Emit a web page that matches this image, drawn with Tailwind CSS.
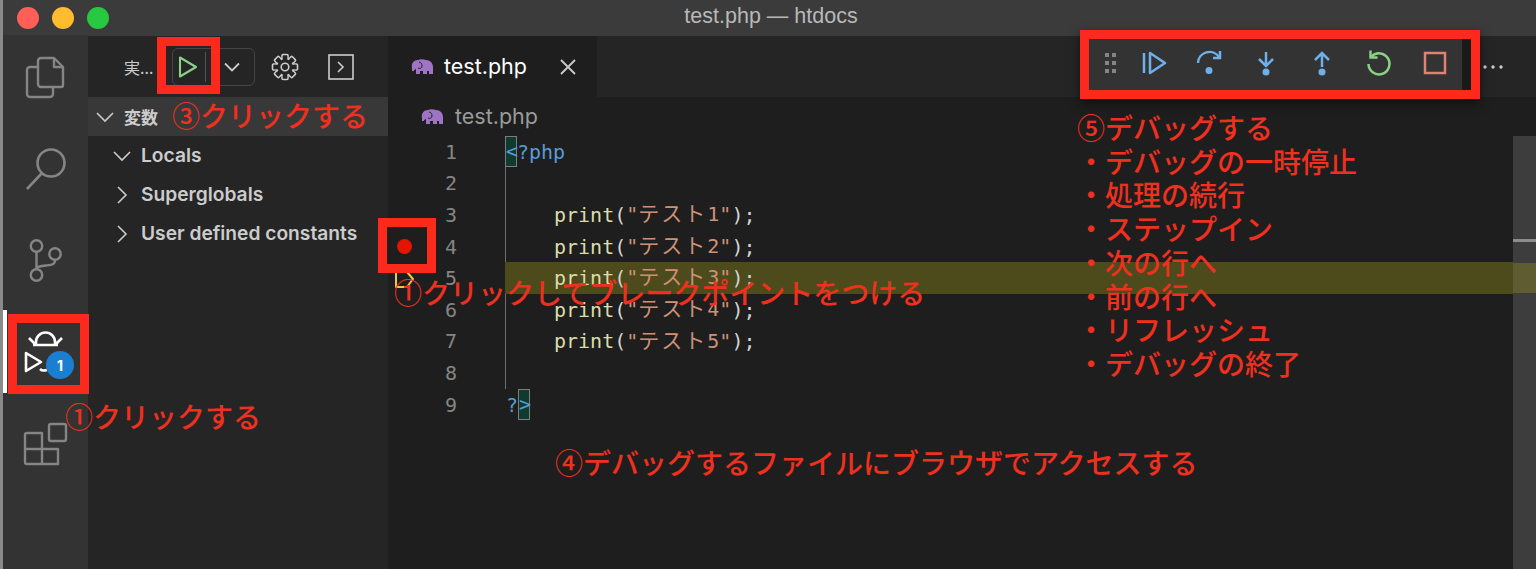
<!DOCTYPE html>
<html lang="ja">
<head>
    <meta charset="UTF-8">
    <script src="https://cdn.jsdelivr.net/npm/@tailwindcss/browser@4"></script>
    <title>test.php — htdocs</title>
</head>
<body class="bg-[#1e1e1e]">
<div class="relative w-[1536px] h-[569px] overflow-hidden flex flex-col [font-family:Inter,'Noto_Sans_CJK_JP',sans-serif]">

  <!-- title bar -->
  <div class="h-9 shrink-0 bg-[#3b3b3b] flex items-center relative border-l-[3px] border-[#8a8a8a]">
    <div class="flex gap-[13px] ml-[14px]">
      <span class="w-[22px] h-[22px] rounded-full bg-[#ff5f57]"></span>
      <span class="w-[22px] h-[22px] rounded-full bg-[#febc2e]"></span>
      <span class="w-[22px] h-[22px] rounded-full bg-[#28c840]"></span>
    </div>
    <div class="absolute left-[678px] top-[3px] w-[180px] text-center text-[21.500px] leading-[26px] text-[#b8b8b8] whitespace-nowrap [font-family:'Liberation_Sans',sans-serif]">test.php — htdocs</div>
  </div>

  <div class="flex-1 flex min-h-0">
    <!-- activity bar -->
    <div class="relative w-[88px] shrink-0 bg-[#333333] border-l-[3px] border-[#8a8a8a] flex flex-col -mt-px">
      <div class="absolute left-0 top-[275px] w-1 h-[83px] bg-white"></div>
      <svg class="mt-[18px] ml-[18px]" width="48" height="48" viewBox="21 53 48 48" fill="none" stroke="#858585" stroke-width="2.4" stroke-linejoin="round">
        <path d="M38 67H30a3 3 0 0 0-3 3v24a3 3 0 0 0 3 3h20a3 3 0 0 0 3-3v-7"/>
        <path d="M41 58h13l9 9v18a2 2 0 0 1-2 2H41a3 3 0 0 1-3-3V61a3 3 0 0 1 3-3z"/>
        <path d="M54 58v9h9"/>
      </svg>
      <svg class="mt-[45px] ml-[18px]" width="48" height="48" viewBox="21 146 48 48" fill="none" stroke="#858585" stroke-width="2.6">
        <circle cx="51" cy="163" r="13.5"/><path d="M42 173L27 189"/>
      </svg>
      <svg class="mt-[42px] ml-[18px]" width="48" height="48" viewBox="21 236 48 48" fill="none" stroke="#858585" stroke-width="2.4">
        <circle cx="36.5" cy="246" r="5.7"/><circle cx="55" cy="254" r="5.7"/><circle cx="36.5" cy="275" r="5.7"/>
        <path d="M36.5 252v17M55 260c0 5-4 5-9 5.500c-5 .5-9.500 1-9.500 3.500"/>
      </svg>
      <svg class="mt-[41px] ml-3 relative" width="60" height="60" viewBox="15 325 60 60" fill="none" stroke="#fff" stroke-width="2.600">
        <path d="M36 345v-3a9.500 9.500 0 0 1 19 0v3M33 345h25M29 338l7 7M62 338l-7 7"/>
        <path d="M26 353l15 9-15 9z" stroke-linejoin="round"/>
        <path d="M40 369c2 2 4 2 7 1"/>
      </svg>
      <div class="absolute left-[43px] top-[316px] w-7 h-7 rounded-full bg-[#1a7fd1] text-white text-[14px] font-bold flex items-center justify-center">1</div>
      <svg class="mt-9 ml-[18px]" width="48" height="48" viewBox="21 421 48 48" fill="none" stroke="#858585" stroke-width="2.4" stroke-linejoin="round">
        <rect x="49" y="424" width="17" height="17" rx="2"/>
        <path d="M27 433h15v16h16v15H27a2 2 0 0 1-2-2v-28a2 2 0 0 1 2-1zM25 449h17v15"/>
      </svg>
    </div>

    <!-- sidebar -->
    <div class="w-[300px] shrink-0 bg-[#252526] flex flex-col">
      <div class="h-[61px] flex items-center text-[#cccccc] relative">
        <span class="ml-9 w-[48px] text-[16px] [font-family:'Noto_Sans_CJK_JP',sans-serif] whitespace-nowrap">実...</span>
        <div class="w-[83px] h-[38px] border border-[#454545] rounded-[6px] flex items-center">
          <svg class="ml-[1px]" width="26" height="26" viewBox="0 0 26 26" fill="none" stroke="#89d185" stroke-width="2.100" stroke-linejoin="round"><path d="M6 3.500l16 9.500-16 9.500z"/></svg>
          <span class="w-px h-[30px] bg-[#555] ml-[5px]"></span>
          <svg class="ml-[15px]" width="22" height="22" viewBox="0 0 22 22" fill="none" stroke="#cccccc" stroke-width="1.800"><path d="M4 7.500l7 7 7-7"/></svg>
        </div>
        <svg class="ml-4" width="28" height="28" viewBox="-14 -14 28 28" fill="none" stroke="#cccccc" stroke-width="1.600" stroke-linejoin="round">
          <g>
            <rect x="-3" y="-12.500" width="6" height="6" rx="1"/>
            <rect x="-3" y="-12.500" width="6" height="6" rx="1" transform="rotate(45)"/>
            <rect x="-3" y="-12.500" width="6" height="6" rx="1" transform="rotate(90)"/>
            <rect x="-3" y="-12.500" width="6" height="6" rx="1" transform="rotate(135)"/>
            <rect x="-3" y="-12.500" width="6" height="6" rx="1" transform="rotate(180)"/>
            <rect x="-3" y="-12.500" width="6" height="6" rx="1" transform="rotate(225)"/>
            <rect x="-3" y="-12.500" width="6" height="6" rx="1" transform="rotate(270)"/>
            <rect x="-3" y="-12.500" width="6" height="6" rx="1" transform="rotate(315)"/>
          </g>
          <circle r="8.500" fill="#252526"/>
          <g fill="#252526" stroke="none">
            <rect x="-2.200" y="-11" width="4.400" height="4"/>
            <rect x="-2.200" y="-11" width="4.400" height="4" transform="rotate(45)"/>
            <rect x="-2.200" y="-11" width="4.400" height="4" transform="rotate(90)"/>
            <rect x="-2.200" y="-11" width="4.400" height="4" transform="rotate(135)"/>
            <rect x="-2.200" y="-11" width="4.400" height="4" transform="rotate(180)"/>
            <rect x="-2.200" y="-11" width="4.400" height="4" transform="rotate(225)"/>
            <rect x="-2.200" y="-11" width="4.400" height="4" transform="rotate(270)"/>
            <rect x="-2.200" y="-11" width="4.400" height="4" transform="rotate(315)"/>
          </g>
          <circle r="3.800"/>
        </svg>
        <svg class="ml-[29px]" width="26" height="26" viewBox="0 0 26 26" fill="none" stroke="#cccccc" stroke-width="1.600"><rect x="1" y="1" width="24" height="24"/><path d="M10 8l5 5-5 5"/></svg>
      </div>
      <div class="h-[39px] bg-[#383838] flex items-center">
        <svg class="ml-[7px]" width="20" height="20" viewBox="0 0 20 20" fill="none" stroke="#cccccc" stroke-width="1.600"><path d="M2 6l8 8 8-8"/></svg>
        <span class="ml-[9px] text-[17px] font-bold text-[#cccccc] [font-family:'Noto_Sans_CJK_JP',sans-serif]">変数</span>
      </div>
      <div class="h-[39px] flex items-center text-[19.200px] font-semibold text-[#cccccc] whitespace-nowrap">
        <svg class="ml-6" width="20" height="20" viewBox="0 0 20 20" fill="none" stroke="#cccccc" stroke-width="1.600"><path d="M2 6l8 8 8-8"/></svg>
        <span class="ml-[9px]">Locals</span>
      </div>
      <div class="h-[39px] flex items-center text-[19.200px] font-semibold text-[#cccccc] whitespace-nowrap">
        <svg class="ml-6" width="20" height="20" viewBox="0 0 20 20" fill="none" stroke="#cccccc" stroke-width="1.600"><path d="M6 2l8 8-8 8"/></svg>
        <span class="ml-[9px]">Superglobals</span>
      </div>
      <div class="h-[39px] flex items-center text-[19.200px] font-semibold text-[#cccccc] whitespace-nowrap">
        <svg class="ml-6" width="20" height="20" viewBox="0 0 20 20" fill="none" stroke="#cccccc" stroke-width="1.600"><path d="M6 2l8 8-8 8"/></svg>
        <span class="ml-[9px]">User defined constants</span>
      </div>
    </div>

    <!-- editor -->
    <div class="flex-1 min-w-0 bg-[#1e1e1e] flex flex-col relative">
      <div class="h-[61px] shrink-0 bg-[#252526] flex">
        <div class="w-[209px] bg-[#1e1e1e] flex items-center pl-[23px]">
          <svg width="22" height="16" viewBox="0 0 22 16" fill="#a074c4"><path d="M1 9C0 4 3 1 7 1c2-1 5-1 8 0 4 0 7 3 7 7v7h-4v-3h-2v3h-4v-3H9v3H5V9c0 1-1 2-2 2v1H1z"/><path d="M8 3c2 0 3 2 3 4s-2 3-4 2" fill="none" stroke="#1e1e1e" stroke-width="1"/></svg>
          <span class="ml-[11px] text-[21.500px] text-white">test.php</span>
          <svg class="ml-[32px]" width="18" height="18" viewBox="0 0 18 18" fill="none" stroke="#cccccc" stroke-width="1.800"><path d="M2 2l14 14M16 2L2 16"/></svg>
        </div>
      </div>
      <div class="h-[39px] shrink-0 flex items-center pl-[33px]">
        <svg width="22" height="16" viewBox="0 0 22 16" fill="#a074c4"><path d="M1 9C0 4 3 1 7 1c2-1 5-1 8 0 4 0 7 3 7 7v7h-4v-3h-2v3h-4v-3H9v3H5V9c0 1-1 2-2 2v1H1z"/><path d="M8 3c2 0 3 2 3 4s-2 3-4 2" fill="none" stroke="#1e1e1e" stroke-width="1"/></svg>
        <span class="ml-[12px] text-[21.500px] text-[#9a9a9a]">test.php</span>
      </div>

      <!-- code -->
      <div class="flex-1 relative text-[20px] [font-family:'DejaVu_Sans_Mono','Noto_Sans_CJK_JP',monospace] whitespace-nowrap">
        <div class="h-[31.6px] flex items-center">
          <div class="w-[69px] text-right text-[#858585]">1</div>
          <div class="ml-[48px] flex-1 h-full flex items-center border-l border-[#6f6f6f]"><span class="inline-block -ml-px h-[31px] w-[12px] leading-[29px] border border-[#7d7d7d] bg-[#0f3a30] text-[#569cd6]">&lt;</span><span class="text-[#569cd6]">?php</span></div>
        </div>
        <div class="h-[31.6px] flex items-center">
          <div class="w-[69px] text-right text-[#858585]">2</div>
          <div class="ml-[48px] flex-1 h-full border-l border-[#6f6f6f]"></div>
        </div>
        <div class="h-[31.6px] flex items-center">
          <div class="w-[69px] text-right text-[#858585]">3</div>
          <div class="ml-[48px] flex-1 h-full flex items-center border-l border-[#6f6f6f] pl-[48px]"><span class="text-[#dcdcaa]">print</span><span class="text-[#d4d4d4]">(</span><span class="text-[#ce9178]">"<span class="text-[21px] tracking-[2px]">テスト</span>1"</span><span class="text-[#d4d4d4]">);</span></div>
        </div>
        <div class="h-[31.6px] flex items-center">
          <div class="w-[69px] text-right text-[#858585]">4</div>
          <div class="ml-[48px] flex-1 h-full flex items-center border-l border-[#6f6f6f] pl-[48px]"><span class="text-[#dcdcaa]">print</span><span class="text-[#d4d4d4]">(</span><span class="text-[#ce9178]">"<span class="text-[21px] tracking-[2px]">テスト</span>2"</span><span class="text-[#d4d4d4]">);</span></div>
        </div>
        <div class="h-[31.6px] flex items-center">
          <div class="w-[69px] text-right text-[#858585]">5</div>
          <div class="ml-[48px] flex-1 h-full flex items-center bg-[#4d4a1b] pl-[49px]"><span class="text-[#dcdcaa]">print</span><span class="text-[#d4d4d4]">(</span><span class="text-[#ce9178]">"<span class="text-[21px] tracking-[2px]">テスト</span>3"</span><span class="text-[#d4d4d4]">);</span></div>
        </div>
        <div class="h-[31.6px] flex items-center">
          <div class="w-[69px] text-right text-[#858585]">6</div>
          <div class="ml-[48px] flex-1 h-full flex items-center border-l border-[#6f6f6f] pl-[48px]"><span class="text-[#dcdcaa]">print</span><span class="text-[#d4d4d4]">(</span><span class="text-[#ce9178]">"<span class="text-[21px] tracking-[2px]">テスト</span>4"</span><span class="text-[#d4d4d4]">);</span></div>
        </div>
        <div class="h-[31.6px] flex items-center">
          <div class="w-[69px] text-right text-[#858585]">7</div>
          <div class="ml-[48px] flex-1 h-full flex items-center border-l border-[#6f6f6f] pl-[48px]"><span class="text-[#dcdcaa]">print</span><span class="text-[#d4d4d4]">(</span><span class="text-[#ce9178]">"<span class="text-[21px] tracking-[2px]">テスト</span>5"</span><span class="text-[#d4d4d4]">);</span></div>
        </div>
        <div class="h-[31.6px] flex items-center">
          <div class="w-[69px] text-right text-[#858585]">8</div>
          <div class="ml-[48px] flex-1 h-full border-l border-[#6f6f6f]"></div>
        </div>
        <div class="h-[31.6px] flex items-center">
          <div class="w-[69px] text-right text-[#858585]">9</div>
          <div class="ml-[48px] flex-1 h-full flex items-center pl-px"><span class="text-[#569cd6]">?</span><span class="inline-block h-[31px] w-[12px] leading-[29px] border border-[#7d7d7d] bg-[#0f3a30] text-[#569cd6]">&gt;</span></div>
        </div>

        <!-- minimap strip + scroll position, over the code area -->
        <div class="absolute right-0 top-0 bottom-0 w-[23px] bg-[#3d3d3d]">
          <div class="mt-[103px] h-[3px] bg-[#8c8c8c]"></div>
          <div class="mt-[21px] h-[30px] bg-[#5f5c32]"></div>
        </div>
        <!-- current-line arrow in gutter -->
        <svg class="absolute left-[6px] top-[132px]" width="22" height="24" viewBox="0 0 22 24" fill="none" stroke="#eec83c" stroke-width="2" stroke-linejoin="round"><path d="M2 4h11l6 7-6 8H2z"/></svg>
      </div>

      <svg class="absolute left-[1094px] top-[26px]" width="22" height="10" viewBox="0 0 22 10" fill="#cccccc"><circle cx="3" cy="5" r="1.700"/><circle cx="11" cy="5" r="1.700"/><circle cx="19" cy="5" r="1.700"/></svg>
    </div>
  </div>

  <!-- floating debug toolbar -->
  <div class="absolute left-[1080px] top-[30px] w-[400px] h-[69px] border-[9px] border-[#fb2a1d] bg-[#333333] flex items-center pl-px pb-[3px] shadow-[0_4px_10px_rgba(0,0,0,0.5)]">
    <svg class="-mr-[13px]" width="40" height="40" viewBox="0 0 40 40" fill="#858585"><rect x="15" y="10" width="4" height="4"/><rect x="22" y="10" width="4" height="4"/><rect x="15" y="18" width="4" height="4"/><rect x="22" y="18" width="4" height="4"/><rect x="15" y="26" width="4" height="4"/><rect x="22" y="26" width="4" height="4"/></svg>
    <div class="flex gap-[16.400px] ml-[16px]">
      <svg width="40" height="40" viewBox="0 0 40 40" fill="none" stroke="#6fb0ea" stroke-width="2.500" stroke-linejoin="round"><path d="M11 10v20"/><path d="M17 10l15 10-15 10z"/></svg>
      <svg width="40" height="40" viewBox="0 0 40 40" fill="none" stroke="#6fb0ea" stroke-width="2.500"><path d="M9 20a11.500 11.500 0 0 1 21-6"/><path d="M31 8v7h-7"/><circle cx="20" cy="27.500" r="3.500" fill="#6fb0ea" stroke="none"/></svg>
      <svg width="40" height="40" viewBox="0 0 40 40" fill="none" stroke="#6fb0ea" stroke-width="2.500"><path d="M20 9v13M13 16l7 7 7-7"/><circle cx="20" cy="29" r="3.500" fill="#6fb0ea" stroke="none"/></svg>
      <svg width="40" height="40" viewBox="0 0 40 40" fill="none" stroke="#6fb0ea" stroke-width="2.500"><path d="M20 24V11M13 17l7-7 7 7"/><circle cx="20" cy="29" r="3.500" fill="#6fb0ea" stroke="none"/></svg>
      <svg width="40" height="40" viewBox="0 0 40 40" fill="none" stroke="#89d185" stroke-width="2.500"><path d="M12.500 13.500A10.500 10.500 0 1 1 9.500 21"/><path d="M11.500 7.500v7h7"/></svg>
      <svg width="40" height="40" viewBox="0 0 40 40" fill="none" stroke="#e0826f" stroke-width="2.500"><rect x="10" y="10" width="20" height="20"/></svg>
    </div>
    <div class="absolute right-0 top-0 bottom-0 w-[9px] bg-[#1a1a1a]"></div>
  </div>

  <!-- red highlight boxes -->
  <div class="absolute left-[157px] top-[37px] w-[63px] h-[57px] border-[9px] border-[#fb2a1d]"></div>
  <div class="absolute left-[8px] top-[314px] w-[81px] h-[80px] border-[9px] border-[#fb2a1d]"></div>
  <div class="absolute left-[378px] top-[218px] w-[58px] h-[55px] border-[9px] border-[#fb2a1d] flex items-center justify-center"><span class="w-[15px] h-[15px] rounded-full bg-[#e51400] mr-[6px] mt-[1px]"></span></div>

  <!-- red annotations -->
  <div class="absolute inset-0 text-[28px] leading-[34px] font-medium text-[#f0301f] whitespace-nowrap [font-family:'Noto_Sans_CJK_JP',sans-serif] pointer-events-none">
    <div class="absolute left-[172px] top-[98px]">③クリックする</div>
    <div class="absolute left-[65px] top-[399px]">①クリックする</div>
    <div class="absolute left-[394px] top-[275px]">①クリックしてブレークポイントをつける</div>
    <div class="absolute left-[555px] top-[445px]">④デバッグするファイルにブラウザでアクセスする</div>
    <div class="absolute left-[1077px] top-[111px] flex flex-col leading-[33.7px]">
      <span>⑤デバッグする</span>
      <span>・デバッグの一時停止</span>
      <span>・処理の続行</span>
      <span>・ステップイン</span>
      <span>・次の行へ</span>
      <span>・前の行へ</span>
      <span>・リフレッシュ</span>
      <span>・デバッグの終了</span>
    </div>
  </div>
</div>
</body>
</html>
